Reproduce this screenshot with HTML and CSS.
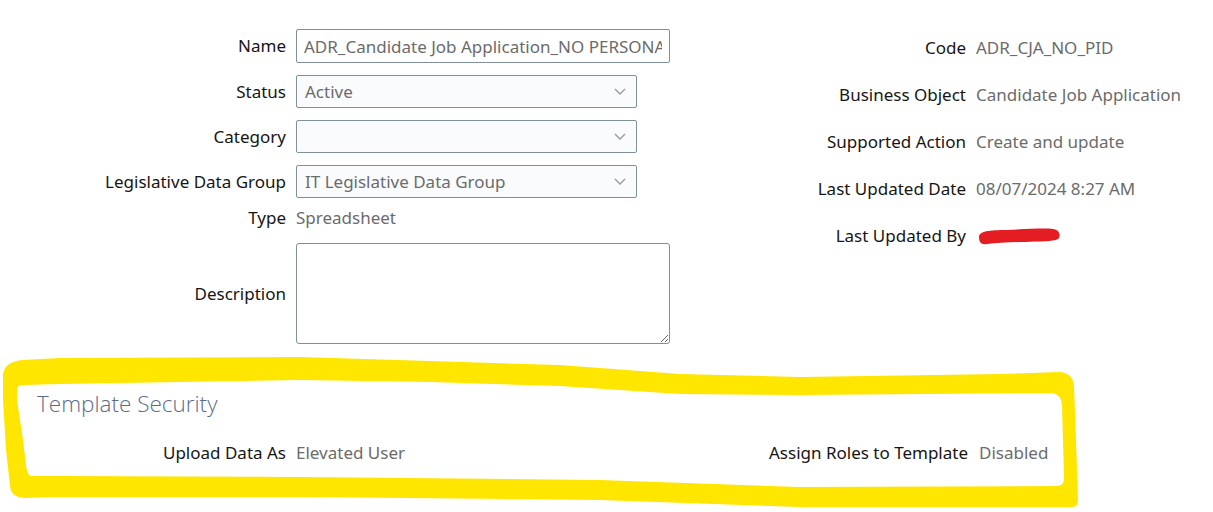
FILE: index.html
```html
<!DOCTYPE html>
<html lang="en">
<head>
<meta charset="utf-8">
<title>Template</title>
<link rel="stylesheet" href="styles.css">
</head>
<body>
<div class="page">
  <div class="top">
    <div class="form-left">
      <div class="lbl r-name">Name</div>
      <div class="field r-name"><input class="text-input" type="text" value="ADR_Candidate Job Application_NO PERSONAL IDENTIFIABLE DATA"></div>

      <div class="lbl r-sel">Status</div>
      <div class="field r-sel">
        <div class="select"><span class="sel-val">Active</span><span class="sel-btn"><svg width="12" height="7" viewBox="0 0 12 7"><path d="M1 1 L6 6 L11 1" fill="none" stroke="#9a9a9a" stroke-width="1.4"/></svg></span></div>
      </div>

      <div class="lbl r-sel">Category</div>
      <div class="field r-sel">
        <div class="select"><span class="sel-val"></span><span class="sel-btn"><svg width="12" height="7" viewBox="0 0 12 7"><path d="M1 1 L6 6 L11 1" fill="none" stroke="#9a9a9a" stroke-width="1.4"/></svg></span></div>
      </div>

      <div class="lbl r-sel">Legislative Data Group</div>
      <div class="field r-sel">
        <div class="select"><span class="sel-val">IT Legislative Data Group</span><span class="sel-btn"><svg width="12" height="7" viewBox="0 0 12 7"><path d="M1 1 L6 6 L11 1" fill="none" stroke="#9a9a9a" stroke-width="1.4"/></svg></span></div>
      </div>

      <div class="lbl r-type">Type</div>
      <div class="val r-type">Spreadsheet</div>

      <div class="lbl r-desc">Description</div>
      <div class="field r-desc"><textarea class="textarea"></textarea></div>
    </div>

    <div class="form-right">
      <div class="lbl">Code</div><div class="val">ADR_CJA_NO_PID</div>
      <div class="lbl">Business Object</div><div class="val">Candidate Job Application</div>
      <div class="lbl">Supported Action</div><div class="val">Create and update</div>
      <div class="lbl">Last Updated Date</div><div class="val">08/07/2024 8:27 AM</div>
      <div class="lbl">Last Updated By</div>
      <div class="val"><svg class="redact" width="84" height="18" viewBox="0 0 84 18"><path d="M2 9 C2 3 12 2 30 2 C50 1 68 0 76 1 C83 2 84 8 81 11 C76 14 62 13 48 14 C34 14 20 15 10 16 C4 17 2 14 2 9 Z" fill="#e41d22"/></svg></div>
    </div>
  </div>

  <section class="security">
    <h2 class="sec-title">Template Security</h2>
    <div class="sec-row">
      <div class="lbl">Upload Data As</div>
      <div class="val">Elevated User</div>
      <div class="lbl">Assign Roles to Template</div>
      <div class="val val-end">Disabled</div>
    </div>
  </section>

  <svg class="highlight" width="1213" height="512" viewBox="0 0 1213 512">
    <path fill="#ffe600" fill-rule="evenodd" d="
      M3 375 Q4 362 22 360 L60 358 L300 357 L430 361 L560 365 L680 374 L800 377 L1000 374 L1060 372 Q1073 373 1074 386 L1076 440 L1078 500 Q1078 508 1070 507 L800 507 L600 500 L300 497 L60 497 L24 498 Q11 497 10 486 L6 450 L3 400 Z
      M17 389 Q17 385 24 385 L60 384 L300 380 L430 382 L560 386 L680 394 L800 395 L1052 393 Q1061 394 1062 405 L1064 478 Q1064 486 1057 486 L800 487 L600 480 L300 477 L60 476 L31 476 Q27 475 26 465 L23 440 L17 400 Z"/>
  </svg>
</div>
</body>
</html>
```

FILE: styles.css
```css
* { box-sizing: border-box; }

html, body {
  margin: 0;
  padding: 0;
  background: #ffffff;
}

body {
  font-family: "Noto Sans", "Open Sans", "DejaVu Sans", sans-serif;
  font-size: 17px;
  color: #161513;
}

.page {
  position: relative;
  width: 1213px;
  height: 512px;
  overflow: hidden;
}

.top {
  display: grid;
  grid-template-columns: 800px 1fr;
  padding-top: 29px;
}

.lbl {
  text-align: right;
  color: #161513;
  white-space: nowrap;
  line-height: 22px;
}

.val {
  color: #6b6b6b;
  white-space: nowrap;
  line-height: 22px;
}

/* left form */
.form-left {
  display: grid;
  grid-template-columns: 286px 374px;
  column-gap: 10px;
  align-items: center;
}

.form-left .r-name { height: 34px; display: flex; align-items: center; justify-content: flex-end; }
.form-left .field.r-name { justify-content: flex-start; }
.form-left .r-sel { height: 33px; margin-top: 12px; display: flex; align-items: center; justify-content: flex-end; }
.form-left .field.r-sel { justify-content: flex-start; }
.form-left .r-type { margin-top: 9px; }
.form-left .r-desc { margin-top: 14px; }
.form-left .field.r-desc { height: 101px; }

.text-input {
  width: 374px;
  height: 34px;
  border: 1px solid #7f909b;
  border-radius: 2px;
  padding: 0 7px;
  font: inherit;
  color: #6b6b6b;
  background: #ffffff;
  outline: none;
}

.select {
  display: flex;
  width: 341px;
  height: 33px;
  border: 1px solid #7f909b;
  border-radius: 2px;
  background: #fafbfd;
}

.sel-val {
  flex: 1;
  display: flex;
  align-items: center;
  padding-left: 8px;
  color: #6b6b6b;
  white-space: nowrap;
}

.sel-btn {
  width: 32px;
  display: flex;
  align-items: center;
  justify-content: center;
}

.textarea {
  display: block;
  width: 374px;
  height: 101px;
  border: 1px solid #7f909b;
  border-radius: 3px;
  resize: both;
  font: inherit;
  background: #ffffff;
  outline: none;
}

/* right form */
.form-right {
  display: grid;
  grid-template-columns: 166px 1fr;
  column-gap: 10px;
  row-gap: 25px;
  align-content: start;
  padding-top: 8px;
}

.redact { display: block; margin-top: 3px; margin-left: 1px; }

/* template security */
.security {
  padding-top: 46px;
}

.sec-title {
  margin: 0 0 0 37px;
  font-family: "Open Sans", "Noto Sans", sans-serif;
  font-weight: 300;
  font-size: 22.5px;
  line-height: 28px;
  color: #5d6b8a;
}

.sec-row {
  display: grid;
  grid-template-columns: 286px 1fr auto 235px;
  column-gap: 10px;
  margin-top: 24px;
}

.val-end { margin-left: 1px; }

.highlight {
  position: absolute;
  left: 0;
  top: 0;
  pointer-events: none;
}
```
